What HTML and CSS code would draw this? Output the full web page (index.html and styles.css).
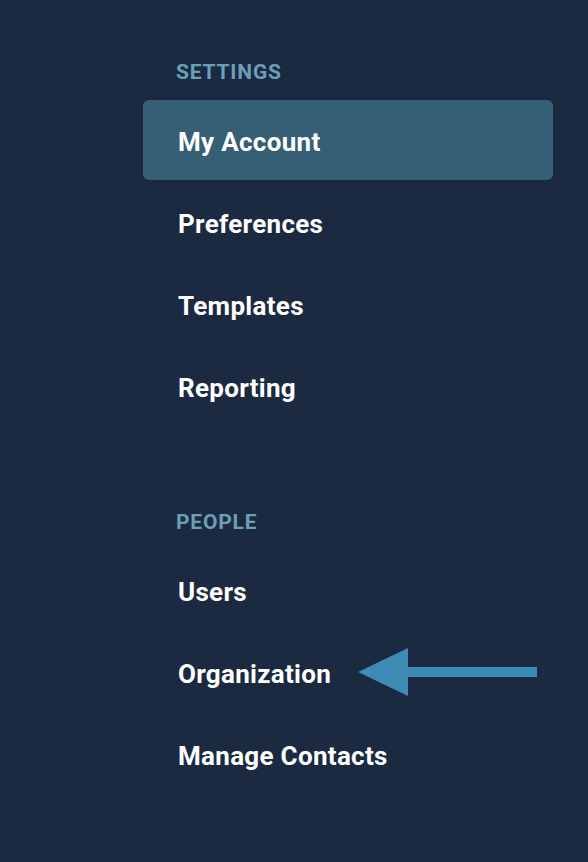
FILE: index.html
```html
<!DOCTYPE html>
<html lang="en">
<head>
  <meta charset="UTF-8">
  <title>Settings</title>
  <link rel="stylesheet" href="styles.css">
</head>
<body>
  <nav class="sidebar">
    <div class="section">
      <h4 class="section-title">Settings</h4>
      <a class="nav-item active" href="#">My Account</a>
      <a class="nav-item" href="#">Preferences</a>
      <a class="nav-item" href="#">Templates</a>
      <a class="nav-item" href="#">Reporting</a>
    </div>

    <div class="section">
      <h4 class="section-title">People</h4>
      <a class="nav-item" href="#">Users</a>
      <a class="nav-item" href="#">Organization
        <svg class="pointer" width="180" height="50" viewBox="0 0 180 50">
          <polygon points="0,25 50,1 50,20 179,20 179,30 50,30 50,49" fill="#3f8bb5"/>
        </svg>
      </a>
      <a class="nav-item" href="#">Manage Contacts</a>
    </div>
  </nav>
</body>
</html>
```

FILE: styles.css
```css
body {
  margin: 0;
  background-color: #1b2a40;
  font-family: Roboto, "Liberation Sans", sans-serif;
  min-height: 862px;
}
.sidebar {
  width: 410px;
  margin-left: 143px;
  padding-top: 56px;
}
.section {
  margin-bottom: 80px;
}
.section-title {
  margin: 0 0 14px 33px;
  padding-top: 1px;
  height: 29px;
  line-height: 30px;
  font-size: 21px;
  font-weight: 700;
  letter-spacing: 0.8px;
  text-transform: uppercase;
  color: #6aa0b7;
}
.nav-item {
  position: relative;
  display: flex;
  align-items: center;
  box-sizing: border-box;
  height: 80px;
  margin-bottom: 2px;
  padding: 3px 0 0 35px;
  border-radius: 6px;
  font-size: 26px;
  font-weight: 700;
  letter-spacing: 0.3px;
  color: #ffffff;
  text-decoration: none;
}
.nav-item.active {
  background-color: #365e75;
}
.pointer {
  position: absolute;
  left: 215px;
  top: 15px;
}
```
